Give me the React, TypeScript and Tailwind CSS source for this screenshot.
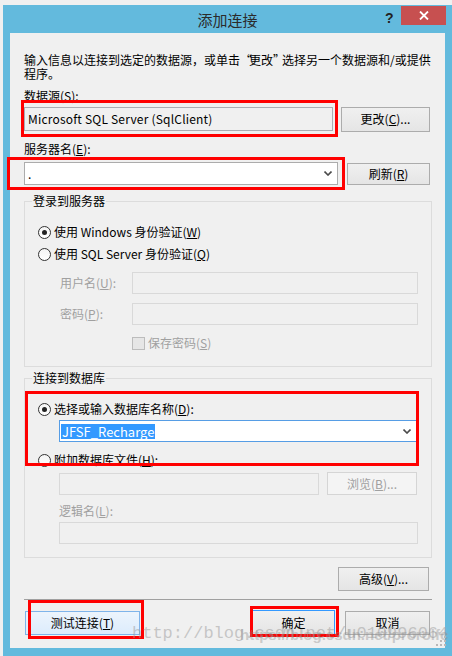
import React from "react";

const ui = "font-['Noto_Sans_CJK_SC','Noto_Sans',sans-serif]";

function Btn({
  children,
  className = "",
  disabled = false,
  tone = "normal"
}: {
  children: React.ReactNode;
  className?: string;
  disabled?: boolean;
  tone?: "normal" | "hot" | "default";
}) {
  const look = disabled
    ? "border-[#d5d5d5] bg-[#f4f4f4] text-[#a0a0a0]"
    : tone === "hot"
      ? "border-[#7eb4ea] bg-gradient-to-b from-[#ecf4fc] to-[#dcecfc] text-black"
      : tone === "default"
        ? "border-[#3399ff] bg-gradient-to-b from-[#f0f0f0] to-[#e5e5e5] text-black"
        : "border-[#acacac] bg-gradient-to-b from-[#f0f0f0] to-[#e5e5e5] text-black";
  return (
    <div className={`flex items-center justify-center border text-[12px] leading-[14px] ${look} ${className}`}>
      {children}
    </div>
  );
}

function Chevron() {
  return (
    <svg width="8" height="5" viewBox="0 0 8 5" className="shrink-0">
      <path d="M0.5 0.5 L4 4 L7.5 0.5" fill="none" stroke="#4a4a4a" strokeWidth="1.6" />
    </svg>
  );
}

function Radio({ checked }: { checked?: boolean }) {
  return (
    <span className="flex h-[13px] w-[13px] shrink-0 items-center justify-center rounded-full border border-[#333] bg-gradient-to-b from-[#f4f4f4] to-[#ffffff]">
      {checked && <span className="h-[5px] w-[5px] rounded-full bg-[#222]" />}
    </span>
  );
}

function Group({ title, height, children }: { title: string; height: string; children: React.ReactNode }) {
  return (
    <fieldset className={`w-[408px] border border-[#dcdcdc] ${height}`}>
      <legend className="ml-[7px] px-[1px] text-[12px] leading-[14px]">{title}</legend>
      {children}
    </fieldset>
  );
}

function Field({ className = "", strong = false }: { className?: string; strong?: boolean }) {
  return <div className={`h-[22px] border bg-[#f0f0f0] ${strong ? "border-[#abadb3]" : "border-[#d9d9d9]"} ${className}`} />;
}

export default function App() {
  return (
    <div className={`relative h-[656px] w-[452px] overflow-hidden bg-[#f0f0f0] pl-[3px] pt-[5px] text-black ${ui}`}>
      <div className="flex h-[651px] w-[449px] flex-col bg-[#63badd]">
        {/* title bar */}
        <div className="relative flex h-[28px] items-center justify-center">
          <span className="mt-[2px] text-[15px] leading-[18px] text-[#2b2b2b]">添加连接</span>
          <span className="absolute left-[382px] top-[4px] text-[14px] font-bold leading-[18px] text-[#222] font-['Liberation_Sans',sans-serif]">?</span>
          <div className="absolute right-[6px] top-[1px] flex h-[19px] w-[45px] items-center justify-center bg-[#c75050]">
            <svg width="10" height="9" viewBox="0 0 10 9">
              <path d="M1 0.5 L9 8.5 M9 0.5 L1 8.5" stroke="#fff" strokeWidth="1.8" />
            </svg>
          </div>
        </div>

        {/* client area */}
        <div className="ml-[7px] flex h-[615px] w-[435px] flex-col bg-[#f0f0f0] pl-[14px] pt-[20px] text-[12px] leading-[14px]">
          <p className="whitespace-nowrap">
            输入信息以连接到选定的数据源，或单击<span className="tracking-[-3px]">“</span>更改<span className="tracking-[-3px]">”</span>选择另一个数据源和/或提供
            <br />
            程序。
          </p>

          <div className="mt-[8px]">
            数据源(<u>S</u>):
          </div>
          <div className="mt-[4px] flex h-[24px] items-center">
            <div className="flex h-[24px] w-[309px] items-center border border-[#abadb3] bg-[#f0f0f0] pl-[3px] tracking-[0.2px]">
              Microsoft SQL Server (SqlClient)
            </div>
            <Btn className="ml-[8px] h-[25px] w-[89px]">
              更改(<u>C</u>)...
            </Btn>
          </div>

          <div className="mt-[11px]">
            服务器名(<u>E</u>):
          </div>
          <div className="mt-[6px] flex h-[23px] items-center">
            <div className="flex h-[23px] w-[314px] items-center justify-between border border-[#acacac] bg-white pl-[3px] pr-[5px]">
              <span>.</span>
              <Chevron />
            </div>
            <Btn className="ml-[9px] h-[22px] w-[83px]">
              刷新(<u>R</u>)
            </Btn>
          </div>

          <div className="mt-[9px]">
            <Group title="登录到服务器" height="h-[173px]">
              <div className="flex flex-col pl-[13px]">
                <div className="mt-[16px] flex h-[16px] items-center gap-[3px]">
                  <Radio checked />
                  <span>
                    使用 Windows 身份验证(<u>W</u>)
                  </span>
                </div>
                <div className="mt-[6px] flex h-[16px] items-center gap-[3px]">
                  <Radio />
                  <span>
                    使用 SQL Server 身份验证(<u>Q</u>)
                  </span>
                </div>
                <div className="mt-[10px] flex h-[22px] items-center pl-[22px] text-[#a0a0a0]">
                  <span className="w-[72px]">
                    用户名(<u>U</u>):
                  </span>
                  <Field className="w-[286px]" />
                </div>
                <div className="mt-[9px] flex h-[22px] items-center pl-[22px] text-[#a0a0a0]">
                  <span className="w-[72px]">
                    密码(<u>P</u>):
                  </span>
                  <Field className="w-[286px]" />
                </div>
                <div className="mt-[10px] flex h-[16px] items-center gap-[3px] pl-[94px] text-[#a0a0a0]">
                  <span className="h-[13px] w-[13px] border border-[#bcbcbc] bg-[#e6e6e6]" />
                  <span>
                    保存密码(<u>S</u>)
                  </span>
                </div>
              </div>
            </Group>
          </div>

          <div className="mt-[4px]">
            <Group title="连接到数据库" height="h-[187px]">
              <div className="flex flex-col pl-[13px]">
                <div className="mt-[16px] flex h-[16px] items-center gap-[3px]">
                  <Radio checked />
                  <span>
                    选择或输入数据库名称(<u>D</u>):
                  </span>
                </div>
                <div className="ml-[21px] mt-[3px] flex h-[22px] w-[358px] items-center justify-between border border-[#569de5] bg-white pl-[1px] pr-[5px]">
                  <span className="bg-[#3399ff] px-[1px] text-[13px] leading-[15px] text-white">JFSF_Recharge</span>
                  <Chevron />
                </div>
                <div className="mt-[10px] flex h-[16px] items-center gap-[3px]">
                  <Radio />
                  <span>
                    附加数据库文件(<u>H</u>):
                  </span>
                </div>
                <div className="ml-[21px] mt-[4px] flex items-center">
                  <Field className="w-[260px]" />
                  <Btn disabled className="ml-[8px] h-[23px] w-[90px]">
                    浏览(<u>B</u>)...
                  </Btn>
                </div>
                <div className="ml-[21px] mt-[9px] text-[#a0a0a0]">
                  逻辑名(<u>L</u>):
                </div>
                <Field className="ml-[21px] mt-[4px] w-[359px]" />
              </div>
            </Group>
          </div>

          <div className="mt-[9px] flex w-[405px] justify-end">
            <Btn className="h-[24px] w-[91px]">
              高级(<u>V</u>)...
            </Btn>
          </div>

          <div className="mt-[8px] h-px w-[408px] bg-[#a0a0a0]" />

          <div className="mt-[10px] flex items-center">
            <Btn tone="hot" className="ml-[1px] h-[24px] w-[115px]">
              测试连接(<u>T</u>)
            </Btn>
            <Btn tone="default" className="ml-[112px] h-[25px] w-[83px]">
              确定
            </Btn>
            <Btn className="ml-[10px] h-[24px] w-[85px]">
              取消
            </Btn>
          </div>
        </div>
      </div>

      {/* red annotation frames */}
      <div className="pointer-events-none absolute left-[21px] top-[100px] h-[37px] w-[317px] border-[3px] border-[#f00]" />
      <div className="pointer-events-none absolute left-[7px] top-[157px] h-[33px] w-[338px] border-[3px] border-[#f00]" />
      <div className="pointer-events-none absolute left-[25px] top-[391px] h-[75px] w-[394px] border-[3px] border-[#f00]" />
      <div className="pointer-events-none absolute left-[28px] top-[600px] h-[39px] w-[116px] border-[3px] border-[#f00]" />
      <div className="pointer-events-none absolute left-[250px] top-[606px] h-[31px] w-[89px] border-[3px] border-[#f00]" />

      {/* blog watermarks */}
      <span className="pointer-events-none absolute left-[132px] top-[624px] whitespace-nowrap text-[17px] leading-[20px] text-[#9a9a9a]/50 font-['Liberation_Mono',monospace]">
        http://blog.csdn.net/u010996064
      </span>
      <span className="pointer-events-none absolute left-[240px] top-[626px] whitespace-nowrap text-[15px] font-bold leading-[18px] text-[#8c8c8c]/40 font-['Liberation_Sans',sans-serif]">
        https://blog.csdn.net/prorolfc
      </span>

      {/* resize grip */}
      <svg className="absolute left-[436px] top-[636px]" width="10" height="10" viewBox="0 0 10 10">
        {[
          [8, 0],
          [8, 4],
          [4, 4],
          [8, 8],
          [4, 8],
          [0, 8]
        ].map(([x, y]) => (
          <rect key={`${x}-${y}`} x={x} y={y} width="2" height="2" fill="#b8b8b8" />
        ))}
      </svg>
    </div>
  );
}
